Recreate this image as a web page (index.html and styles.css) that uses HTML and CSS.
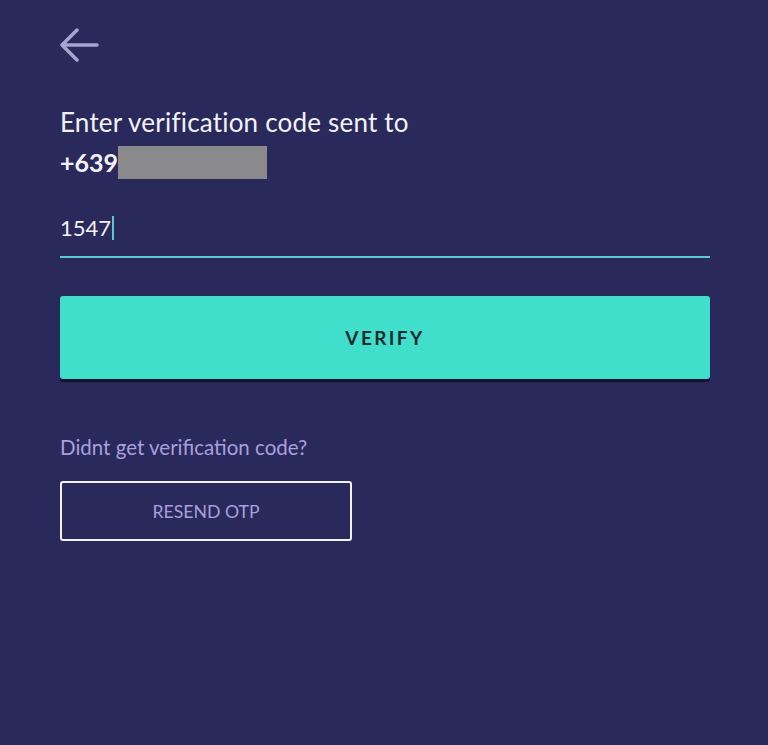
FILE: index.html
```html
<!DOCTYPE html>
<html>
<head>
  <title>Verify</title>
  <link rel="stylesheet" href="styles.css">
</head>
<body>
  <div class="screen">
    <button class="back" aria-label="Back">
      <svg width="40" height="36" viewBox="0 0 40 36">
        <path d="M38 17H3M18 2L3 17l15 15" fill="none" stroke="#a7a5cf" stroke-width="3.5" stroke-linecap="round" stroke-linejoin="round"/>
      </svg>
    </button>

    <div class="title">Enter verification code sent to</div>
    <div class="phone">+639<span class="masked"></span></div>

    <div class="code-field">
      <span class="code">1547</span><span class="caret"></span>
    </div>

    <button class="verify">VERIFY</button>

    <div class="hint">Didnt get verification code?</div>
    <button class="resend">RESEND OTP</button>
  </div>
</body>
</html>
```

FILE: styles.css
```css
body {
  margin: 0;
  background-color: #2a295c;
  font-family: Lato, 'Open Sans', sans-serif;
  color: #f2f2f8;
}

.screen {
  padding: 28px 58px 0 60px;
  height: 717px;
}

.back {
  background: none;
  border: 0;
  padding: 0;
  display: block;
  margin-left: -1px;
  height: 36px;
}

.title {
  margin-top: 43px;
  font-size: 26px;
  line-height: 30px;
  letter-spacing: 0.2px;
}

.phone {
  margin-top: 9px;
  font-size: 25px;
  font-weight: bold;
  line-height: 33px;
  display: flex;
  align-items: center;
}

.masked {
  display: inline-block;
  width: 149px;
  height: 33px;
  background-color: #8a8a8c;
}

.code-field {
  margin-top: 34px;
  padding-bottom: 13px;
  border-bottom: 2px solid #5ec6d8;
  display: flex;
  align-items: center;
  font-size: 22px;
  line-height: 30px;
}

.caret {
  display: inline-block;
  width: 2px;
  height: 24px;
  background-color: #5ec6d8;
  margin-left: 1px;
}

.verify {
  display: block;
  width: 100%;
  margin-top: 38px;
  height: 83px;
  border: 0;
  border-radius: 3px;
  background-color: #3fdfcb;
  box-shadow: 0 3px 1px #101030;
  font-family: Lato, sans-serif;
  font-size: 19px;
  font-weight: bold;
  letter-spacing: 2.4px;
  color: #1d2b2e;
}

.hint {
  margin-top: 56px;
  font-size: 20.5px;
  color: #a99fdc;
}

.resend {
  display: block;
  margin-top: 22px;
  width: 292px;
  height: 60px;
  background: none;
  border: 2px solid #f2f2f8;
  border-radius: 3px;
  font-family: Lato, sans-serif;
  font-size: 17.7px;
  color: #a99fdc;
}
```
